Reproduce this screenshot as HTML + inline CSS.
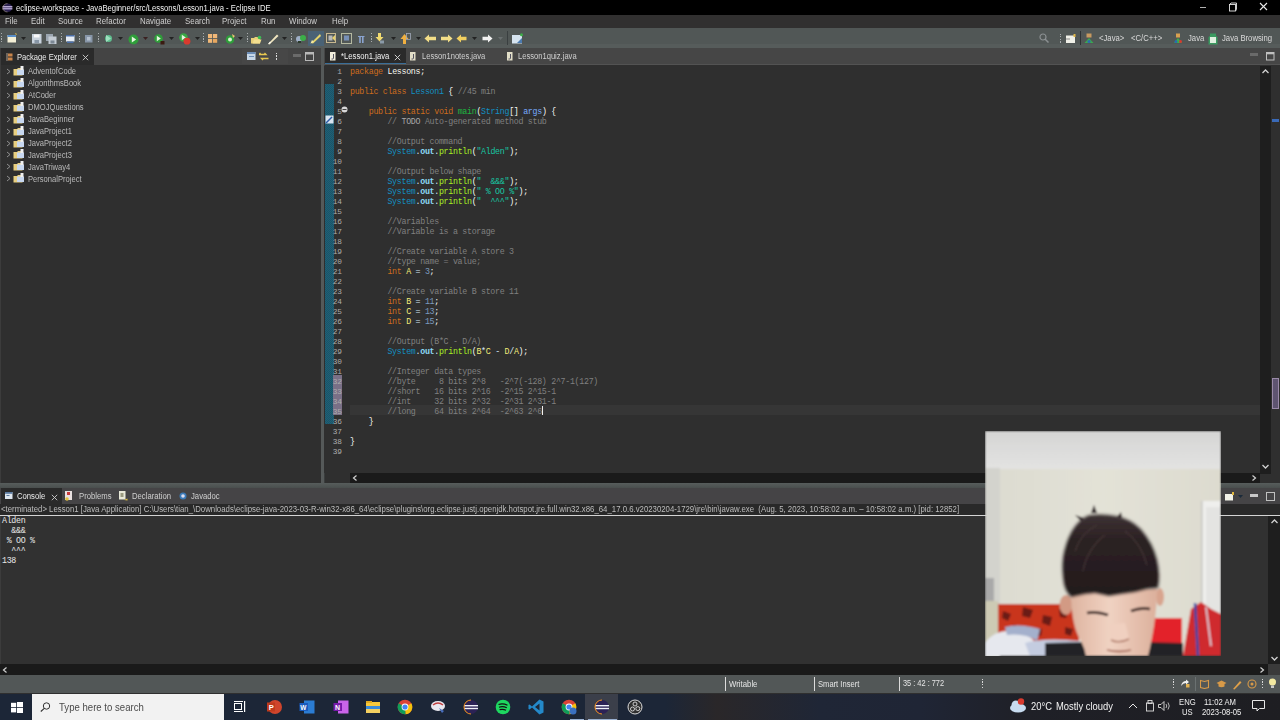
<!DOCTYPE html><html><head><meta charset="utf-8"><style>
html,body{margin:0;padding:0;width:1280px;height:720px;overflow:hidden;background:#2f2f2f;position:relative}
div{box-sizing:border-box}
.code{position:absolute;font-family:'Liberation Mono',monospace;font-size:8.3px;letter-spacing:-0.3px;line-height:10px;white-space:pre;color:#d9e8f7}
.k{color:#cc6c1d}.c{color:#808080}.t{color:#1290c3}.s{color:#17c6a3}.m{color:#1eb540}.p{color:#79abff}.f{color:#8ddaf8;font-weight:bold}.mc{color:#a7ec21}.v{color:#f3ec79}.w{color:#f9faf4}.tg{color:#a8a8a8}.n{color:#7c9cc0}
.ln{position:absolute;font-family:'Liberation Mono',monospace;font-size:7.8px;line-height:10px;white-space:pre;color:#adadad;text-align:right}
</style></head><body>
<div style="position:absolute;left:0px;top:0px;width:1280px;height:15px;background:#000;"></div>
<div style="position:absolute;left:16px;top:4.05px;font:8.47px 'Liberation Sans', sans-serif;color:#f4f4f4;white-space:pre;line-height:1;transform:scaleX(0.9091);transform-origin:0 0;">eclipse-workspace - JavaBeginner/src/Lessons/Lesson1.java - Eclipse IDE</div>
<svg style="position:absolute;left:2px;top:2px;" width="11" height="11" viewBox="0 0 11 11"><ellipse cx="5.5" cy="5.8" rx="4.8" ry="4.2" fill="#2a2050"/><rect x="0.6" y="4.2" width="9.8" height="1.2" fill="#d8c8f0"/><rect x="0.6" y="6.2" width="9.8" height="1.2" fill="#c8b8e8"/><path d="M5.5 1.6A4.8 4.2 0 0 0 5.5 10" fill="none" stroke="#a89a8a" stroke-width="0.6"/></svg>
<div style="position:absolute;left:1199.5px;top:6.5px;width:6.5px;height:1px;background:#b0b0b0;"></div>
<svg style="position:absolute;left:1228px;top:2px;" width="11" height="11" viewBox="0 0 11 11"><rect x="1.5" y="2.5" width="6" height="6.5" fill="none" stroke="#e6e6e6" stroke-width="0.9"/><path d="M1.5 2.5L3 1H8.5V7.5L7.5 9" fill="none" stroke="#e6e6e6" stroke-width="0.9"/></svg>
<svg style="position:absolute;left:1259px;top:2px;" width="10" height="10" viewBox="0 0 10 10"><path d="M1 1L8 8M8 1L1 8" stroke="#e8e8e8" stroke-width="1.1"/></svg>
<div style="position:absolute;left:0px;top:15px;width:1280px;height:13px;background:#313030;"></div>
<div style="position:absolute;left:5px;top:16.83px;font:8.69px 'Liberation Sans', sans-serif;color:#cfcfcf;white-space:pre;line-height:1;transform:scaleX(0.9091);transform-origin:0 0;">File</div>
<div style="position:absolute;left:31px;top:16.83px;font:8.69px 'Liberation Sans', sans-serif;color:#cfcfcf;white-space:pre;line-height:1;transform:scaleX(0.9091);transform-origin:0 0;">Edit</div>
<div style="position:absolute;left:58px;top:16.83px;font:8.69px 'Liberation Sans', sans-serif;color:#cfcfcf;white-space:pre;line-height:1;transform:scaleX(0.9091);transform-origin:0 0;">Source</div>
<div style="position:absolute;left:96px;top:16.83px;font:8.69px 'Liberation Sans', sans-serif;color:#cfcfcf;white-space:pre;line-height:1;transform:scaleX(0.9091);transform-origin:0 0;">Refactor</div>
<div style="position:absolute;left:139.5px;top:16.83px;font:8.69px 'Liberation Sans', sans-serif;color:#cfcfcf;white-space:pre;line-height:1;transform:scaleX(0.9091);transform-origin:0 0;">Navigate</div>
<div style="position:absolute;left:185px;top:16.83px;font:8.69px 'Liberation Sans', sans-serif;color:#cfcfcf;white-space:pre;line-height:1;transform:scaleX(0.9091);transform-origin:0 0;">Search</div>
<div style="position:absolute;left:222px;top:16.83px;font:8.69px 'Liberation Sans', sans-serif;color:#cfcfcf;white-space:pre;line-height:1;transform:scaleX(0.9091);transform-origin:0 0;">Project</div>
<div style="position:absolute;left:261px;top:16.83px;font:8.69px 'Liberation Sans', sans-serif;color:#cfcfcf;white-space:pre;line-height:1;transform:scaleX(0.9091);transform-origin:0 0;">Run</div>
<div style="position:absolute;left:289px;top:16.83px;font:8.69px 'Liberation Sans', sans-serif;color:#cfcfcf;white-space:pre;line-height:1;transform:scaleX(0.9091);transform-origin:0 0;">Window</div>
<div style="position:absolute;left:332px;top:16.83px;font:8.69px 'Liberation Sans', sans-serif;color:#cfcfcf;white-space:pre;line-height:1;transform:scaleX(0.9091);transform-origin:0 0;">Help</div>
<div style="position:absolute;left:0px;top:28px;width:1280px;height:19.5px;background:#515756;"></div>
<div style="position:absolute;left:0px;top:44px;width:1280px;height:3.5px;background:#565c5b;"></div>
<div style="position:absolute;left:0.5px;top:33.0px;width:1.4px;height:1.4px;background:#a8acae;"></div>
<div style="position:absolute;left:0.5px;top:35.6px;width:1.4px;height:1.4px;background:#a8acae;"></div>
<div style="position:absolute;left:0.5px;top:38.2px;width:1.4px;height:1.4px;background:#a8acae;"></div>
<div style="position:absolute;left:0.5px;top:40.8px;width:1.4px;height:1.4px;background:#a8acae;"></div>
<svg style="position:absolute;left:7px;top:33px;" width="10" height="10" viewBox="0 0 10 10"><rect x="0.5" y="2" width="8.5" height="7.5" fill="#f3efd6"/><rect x="0.5" y="2" width="8.5" height="2" fill="#5a8fc9"/><path d="M8 0L9 2L10 1Z" fill="#f2c94c"/></svg>
<svg style="position:absolute;left:21.0px;top:37px;" width="5" height="3" viewBox="0 0 5 3"><path d="M0 0H5L2.5 3Z" fill="#222"/></svg>
<svg style="position:absolute;left:32px;top:33.5px;" width="10" height="10" viewBox="0 0 10 10"><rect x="0" y="0" width="9.5" height="9.5" fill="#c9d3dd"/><rect x="2" y="0.5" width="5.5" height="3" fill="#fafafa"/><rect x="2.5" y="6" width="4.5" height="3" fill="#8796a6"/></svg>
<svg style="position:absolute;left:46px;top:33.5px;" width="11" height="10" viewBox="0 0 11 10"><rect x="0" y="0" width="7" height="7" fill="#9aa5b0"/><rect x="2.5" y="2.5" width="8" height="7.5" fill="#c3cbd3"/><rect x="4.5" y="6.5" width="4" height="3" fill="#7b8894"/></svg>
<div style="position:absolute;left:60.5px;top:33.0px;width:1.4px;height:1.4px;background:#a8acae;"></div>
<div style="position:absolute;left:60.5px;top:35.6px;width:1.4px;height:1.4px;background:#a8acae;"></div>
<div style="position:absolute;left:60.5px;top:38.2px;width:1.4px;height:1.4px;background:#a8acae;"></div>
<div style="position:absolute;left:60.5px;top:40.8px;width:1.4px;height:1.4px;background:#a8acae;"></div>
<svg style="position:absolute;left:66px;top:34.5px;" width="9" height="8" viewBox="0 0 9 8"><rect x="0" y="0" width="8.5" height="6.5" fill="#e6edf5"/><rect x="0" y="0" width="8.5" height="1.5" fill="#4a6ea8"/><rect x="1" y="6.5" width="6.5" height="1.5" fill="#4a6ea8"/></svg>
<div style="position:absolute;left:79px;top:33.0px;width:1.4px;height:1.4px;background:#a8acae;"></div>
<div style="position:absolute;left:79px;top:35.6px;width:1.4px;height:1.4px;background:#a8acae;"></div>
<div style="position:absolute;left:79px;top:38.2px;width:1.4px;height:1.4px;background:#a8acae;"></div>
<div style="position:absolute;left:79px;top:40.8px;width:1.4px;height:1.4px;background:#a8acae;"></div>
<svg style="position:absolute;left:85px;top:35px;" width="8" height="8" viewBox="0 0 8 8"><rect x="0" y="0" width="7.5" height="7.5" fill="#8796a8"/><rect x="2" y="2" width="3.5" height="3.5" fill="#b6c2d0"/></svg>
<div style="position:absolute;left:98px;top:33.0px;width:1.4px;height:1.4px;background:#a8acae;"></div>
<div style="position:absolute;left:98px;top:35.6px;width:1.4px;height:1.4px;background:#a8acae;"></div>
<div style="position:absolute;left:98px;top:38.2px;width:1.4px;height:1.4px;background:#a8acae;"></div>
<div style="position:absolute;left:98px;top:40.8px;width:1.4px;height:1.4px;background:#a8acae;"></div>
<svg style="position:absolute;left:104px;top:34px;" width="9" height="9" viewBox="0 0 9 9"><circle cx="4.5" cy="4.5" r="3.5" fill="#5fbf8f"/><path d="M2 1L7 4.5L2 8Z" fill="#9fe0c0"/></svg>
<svg style="position:absolute;left:118.0px;top:37px;" width="5" height="3" viewBox="0 0 5 3"><path d="M0 0H5L2.5 3Z" fill="#222"/></svg>
<svg style="position:absolute;left:128px;top:33.5px;" width="11" height="11" viewBox="0 0 11 11"><circle cx="5.5" cy="5.5" r="5" fill="#2f9e3a"/><path d="M3.8 2.5L8.2 5.5L3.8 8.5Z" fill="#e6f5e0"/></svg>
<svg style="position:absolute;left:143.0px;top:37px;" width="5" height="3" viewBox="0 0 5 3"><path d="M0 0H5L2.5 3Z" fill="#3a2020"/></svg>
<svg style="position:absolute;left:154px;top:33.5px;" width="11" height="11" viewBox="0 0 11 11"><circle cx="4.5" cy="4.5" r="4.3" fill="#2f9e3a"/><path d="M2.8 1.8L6.8 4.5L2.8 7.2Z" fill="#e6f5e0"/><rect x="6.5" y="7" width="4" height="3.5" fill="#3a1a10"/></svg>
<svg style="position:absolute;left:168.5px;top:37px;" width="5" height="3" viewBox="0 0 5 3"><path d="M0 0H5L2.5 3Z" fill="#222"/></svg>
<svg style="position:absolute;left:179px;top:33px;" width="12" height="12" viewBox="0 0 12 12"><circle cx="4.5" cy="4.5" r="4.3" fill="#3aa845"/><path d="M2.8 1.8L6.8 4.5L2.8 7.2Z" fill="#e6f5e0"/><circle cx="8" cy="8.2" r="3.4" fill="#d83a2e"/></svg>
<svg style="position:absolute;left:194.5px;top:37px;" width="5" height="3" viewBox="0 0 5 3"><path d="M0 0H5L2.5 3Z" fill="#222"/></svg>
<div style="position:absolute;left:203px;top:33.0px;width:1.4px;height:1.4px;background:#a8acae;"></div>
<div style="position:absolute;left:203px;top:35.6px;width:1.4px;height:1.4px;background:#a8acae;"></div>
<div style="position:absolute;left:203px;top:38.2px;width:1.4px;height:1.4px;background:#a8acae;"></div>
<div style="position:absolute;left:203px;top:40.8px;width:1.4px;height:1.4px;background:#a8acae;"></div>
<svg style="position:absolute;left:208px;top:34px;" width="10" height="9" viewBox="0 0 10 9"><rect x="0" y="0" width="4.2" height="4" fill="#f0b878"/><rect x="5" y="0" width="4.2" height="4" fill="#f0b878"/><rect x="0" y="4.8" width="4.2" height="4" fill="#f0b878"/><rect x="5" y="4.8" width="4.2" height="4" fill="#e8a860"/></svg>
<svg style="position:absolute;left:225px;top:33.5px;" width="11" height="10" viewBox="0 0 11 10"><circle cx="5" cy="5.5" r="4.3" fill="#2e9e3a"/><circle cx="5" cy="5.5" r="2" fill="#d8f0d0"/><path d="M7 0L10 2L8 4Z" fill="#e6c870"/></svg>
<svg style="position:absolute;left:238.0px;top:37px;" width="5" height="3" viewBox="0 0 5 3"><path d="M0 0H5L2.5 3Z" fill="#222"/></svg>
<div style="position:absolute;left:246.5px;top:33.0px;width:1.4px;height:1.4px;background:#a8acae;"></div>
<div style="position:absolute;left:246.5px;top:35.6px;width:1.4px;height:1.4px;background:#a8acae;"></div>
<div style="position:absolute;left:246.5px;top:38.2px;width:1.4px;height:1.4px;background:#a8acae;"></div>
<div style="position:absolute;left:246.5px;top:40.8px;width:1.4px;height:1.4px;background:#a8acae;"></div>
<svg style="position:absolute;left:251px;top:33.5px;" width="11" height="10" viewBox="0 0 11 10"><path d="M0 4H3L4 3H9V9.5H0Z" fill="#e8cf78"/><path d="M1.5 9.5L3 5.5H10.5L9 9.5Z" fill="#f3df90"/><circle cx="8.5" cy="3.5" r="1.8" fill="#3cba54"/></svg>
<svg style="position:absolute;left:267px;top:33px;" width="12" height="12" viewBox="0 0 12 12"><path d="M1 11L10 1.5L11.5 3L2.5 11.5Z" fill="#f0e6c0"/><path d="M1 11L3 8.5L4 10Z" fill="#ffffff"/></svg>
<svg style="position:absolute;left:282.0px;top:37px;" width="5" height="3" viewBox="0 0 5 3"><path d="M0 0H5L2.5 3Z" fill="#222"/></svg>
<div style="position:absolute;left:290.8px;top:33.0px;width:1.4px;height:1.4px;background:#a8acae;"></div>
<div style="position:absolute;left:290.8px;top:35.6px;width:1.4px;height:1.4px;background:#a8acae;"></div>
<div style="position:absolute;left:290.8px;top:38.2px;width:1.4px;height:1.4px;background:#a8acae;"></div>
<div style="position:absolute;left:290.8px;top:40.8px;width:1.4px;height:1.4px;background:#a8acae;"></div>
<svg style="position:absolute;left:296px;top:34px;" width="10" height="9" viewBox="0 0 10 9"><circle cx="3" cy="5" r="3" fill="#9fb0c8"/><circle cx="7" cy="4" r="3" fill="#3cae48"/><rect x="2" y="7" width="3" height="2" fill="#2a3a2a"/></svg>
<div style="position:absolute;left:308px;top:30.5px;width:15.5px;height:15px;background:#4a6275;"></div>
<svg style="position:absolute;left:310px;top:33px;" width="12" height="11" viewBox="0 0 12 11"><path d="M1 10L10 1L11 3L3 10.5Z" fill="#e6d46a"/><path d="M0.5 10.5L4 9L2 7Z" fill="#f4eaa8"/></svg>
<svg style="position:absolute;left:326px;top:33px;" width="10" height="10" viewBox="0 0 10 10"><rect x="0.5" y="0.5" width="9" height="9" fill="none" stroke="#c8b890"/><rect x="2.5" y="2.5" width="4" height="5" fill="#b8b8b8"/><path d="M6 5L9 2V8Z" fill="#e6d070"/></svg>
<svg style="position:absolute;left:341px;top:33px;" width="11" height="11" viewBox="0 0 11 11"><rect x="0.5" y="0.5" width="10" height="10" fill="none" stroke="#b4b8a0"/><rect x="3" y="2.5" width="5" height="5" fill="#7890b8"/></svg>
<svg style="position:absolute;left:358px;top:34.5px;" width="7" height="8" viewBox="0 0 7 8"><path d="M0 1H6.5V2H0Z" fill="#8aa4d0"/><rect x="1.2" y="2" width="1.6" height="6" fill="#8aa4d0"/><rect x="4" y="2" width="1.6" height="6" fill="#8aa4d0"/></svg>
<div style="position:absolute;left:371px;top:33.0px;width:1.4px;height:1.4px;background:#a8acae;"></div>
<div style="position:absolute;left:371px;top:35.6px;width:1.4px;height:1.4px;background:#a8acae;"></div>
<div style="position:absolute;left:371px;top:38.2px;width:1.4px;height:1.4px;background:#a8acae;"></div>
<div style="position:absolute;left:371px;top:40.8px;width:1.4px;height:1.4px;background:#a8acae;"></div>
<svg style="position:absolute;left:375px;top:33px;" width="10" height="11" viewBox="0 0 10 11"><path d="M3 0H6V4H8.5L4.5 8.5L0.5 4H3Z" fill="#f0da70"/><rect x="5" y="7.5" width="4" height="3" fill="#8a9aa8"/></svg>
<svg style="position:absolute;left:390.5px;top:37px;" width="5" height="3" viewBox="0 0 5 3"><path d="M0 0H5L2.5 3Z" fill="#222"/></svg>
<svg style="position:absolute;left:400px;top:32.5px;" width="11" height="12" viewBox="0 0 11 12"><path d="M3 11V6H0.5L4.5 1L8.5 6H6V11Z" fill="#f0b040"/><rect x="6.5" y="0.5" width="4" height="6" fill="none" stroke="#a0a8b8" stroke-width="0.8"/></svg>
<svg style="position:absolute;left:416.25px;top:37px;" width="5" height="3" viewBox="0 0 5 3"><path d="M0 0H5L2.5 3Z" fill="#222"/></svg>
<svg style="position:absolute;left:424px;top:34px;" width="13" height="9" viewBox="0 0 13 9"><path d="M0.5 4.5L5 0.5V2.8H12V6.2H5V8.5Z" fill="#f2de88"/></svg>
<svg style="position:absolute;left:440px;top:34px;" width="13" height="9" viewBox="0 0 13 9"><path d="M12.5 4.5L8 0.5V2.8H1V6.2H8V8.5Z" fill="#f2de88"/></svg>
<svg style="position:absolute;left:456px;top:34px;" width="11" height="9" viewBox="0 0 11 9"><path d="M0.5 4.5L5 0.5V2.8H10.5V6.2H5V8.5Z" fill="#f2d060"/></svg>
<svg style="position:absolute;left:472.25px;top:37px;" width="5" height="3" viewBox="0 0 5 3"><path d="M0 0H5L2.5 3Z" fill="#222"/></svg>
<svg style="position:absolute;left:482px;top:34px;" width="11" height="9" viewBox="0 0 11 9"><path d="M10.5 4.5L6 0.5V2.8H0.5V6.2H6V8.5Z" fill="#f2f2f2"/></svg>
<svg style="position:absolute;left:497.5px;top:37px;" width="5" height="3" viewBox="0 0 5 3"><path d="M0 0H5L2.5 3Z" fill="#6a6f70"/></svg>
<div style="position:absolute;left:506.5px;top:31px;width:1px;height:14px;background:#3a3f40;"></div>
<svg style="position:absolute;left:512px;top:33px;" width="11" height="11" viewBox="0 0 11 11"><rect x="0" y="2" width="10" height="8.5" fill="#d6e4f0"/><path d="M5 10L10 5V10Z" fill="#4a7ab0"/><circle cx="9.5" cy="1.8" r="1.5" fill="#3cae48"/></svg>
<svg style="position:absolute;left:1039px;top:33px;" width="10" height="11" viewBox="0 0 10 11"><circle cx="4" cy="4" r="3" fill="none" stroke="#8b9092" stroke-width="1.2"/><path d="M6 6L9.5 9.5" stroke="#8b9092" stroke-width="1.5"/></svg>
<div style="position:absolute;left:1059.5px;top:33.5px;width:1.4px;height:1.4px;background:#a8acae;"></div>
<div style="position:absolute;left:1059.5px;top:36.1px;width:1.4px;height:1.4px;background:#a8acae;"></div>
<div style="position:absolute;left:1059.5px;top:38.7px;width:1.4px;height:1.4px;background:#a8acae;"></div>
<div style="position:absolute;left:1059.5px;top:41.3px;width:1.4px;height:1.4px;background:#a8acae;"></div>
<svg style="position:absolute;left:1066px;top:34px;" width="10" height="9" viewBox="0 0 10 9"><rect x="0" y="1.5" width="9" height="7.5" fill="#f0f0e8"/><rect x="0" y="4.5" width="4" height="1" fill="#888"/><path d="M7.5 0H9.5V3H7.5Z" fill="#e2b848"/></svg>
<div style="position:absolute;left:1080px;top:31px;width:1px;height:14px;background:#2e3234;"></div>
<svg style="position:absolute;left:1084px;top:33px;" width="11" height="11" viewBox="0 0 11 11"><rect x="2.5" y="0.5" width="5" height="4" fill="#c89a60"/><path d="M0.5 10L5 5L9.5 10Z" fill="#3ca850"/><circle cx="5" cy="8.5" r="1.6" fill="#2a6ab0"/></svg>
<div style="position:absolute;left:1099px;top:34.35px;font:8.47px 'Liberation Sans', sans-serif;color:#dadada;white-space:pre;line-height:1;transform:scaleX(0.9091);transform-origin:0 0;">&lt;Java&gt;</div>
<div style="position:absolute;left:1131px;top:34.35px;font:8.47px 'Liberation Sans', sans-serif;color:#dadada;white-space:pre;line-height:1;transform:scaleX(0.9091);transform-origin:0 0;">&lt;C/C++&gt;</div>
<svg style="position:absolute;left:1173px;top:33px;" width="11" height="11" viewBox="0 0 11 11"><rect x="3" y="0.5" width="4" height="4" fill="#d8a050"/><path d="M1 10L5 5L9 10Z" fill="#3cae48"/><circle cx="3" cy="8.5" r="1.5" fill="#2a6ab0"/><circle cx="7.5" cy="8.5" r="1.5" fill="#d83a2e"/></svg>
<div style="position:absolute;left:1188px;top:34.35px;font:8.47px 'Liberation Sans', sans-serif;color:#dadada;white-space:pre;line-height:1;transform:scaleX(0.9091);transform-origin:0 0;">Java</div>
<svg style="position:absolute;left:1208px;top:32.5px;" width="10" height="12" viewBox="0 0 10 12"><path d="M2 0.5H8V3L9.5 4V11.5H0.5V4L2 3Z" fill="#3a9a60"/><rect x="2" y="4" width="6" height="6" fill="#e0f0e0"/></svg>
<div style="position:absolute;left:1222px;top:34.35px;font:8.47px 'Liberation Sans', sans-serif;color:#dadada;white-space:pre;line-height:1;transform:scaleX(0.9091);transform-origin:0 0;">Java Browsing</div>
<div style="position:absolute;left:0px;top:47.5px;width:321px;height:436px;background:#2f2f2f;"></div>
<div style="position:absolute;left:0px;top:47.5px;width:321px;height:17px;background:#444444;"></div>
<div style="position:absolute;left:0px;top:47.5px;width:1px;height:436px;background:#3c3c3c;"></div>
<div style="position:absolute;left:1px;top:48px;width:93px;height:16.5px;background:#2a2a2a;"></div>
<svg style="position:absolute;left:6px;top:52.5px;" width="7" height="8" viewBox="0 0 7 8"><rect x="0.5" y="0" width="1" height="8" fill="#b0a090"/><rect x="2" y="0.5" width="4.5" height="3" fill="#c8844a"/><rect x="2" y="4.5" width="4.5" height="3" fill="#c8844a"/></svg>
<div style="position:absolute;left:16.8px;top:52.56px;font:8.36px 'Liberation Sans', sans-serif;color:#ececec;white-space:pre;line-height:1;transform:scaleX(0.9091);transform-origin:0 0;">Package Explorer</div>
<svg style="position:absolute;left:82px;top:53.5px;" width="7" height="7" viewBox="0 0 7 7"><path d="M0.8 0.8L6.2 6.2M6.2 0.8L0.8 6.2" stroke="#cfcfcf" stroke-width="0.9"/></svg>
<div style="position:absolute;left:242px;top:48.5px;width:46px;height:15px;background:#474747;"></div>
<svg style="position:absolute;left:246.5px;top:52px;" width="9" height="9" viewBox="0 0 9 9"><rect x="0" y="0" width="8.5" height="8" fill="#c8d8e8"/><rect x="0" y="0" width="8.5" height="2" fill="#6e8fb8"/><rect x="2" y="4" width="5" height="1" fill="#6e8fb8"/></svg>
<svg style="position:absolute;left:258.5px;top:52px;" width="10" height="9" viewBox="0 0 10 9"><path d="M0 2.5H7L5.5 1M0 2.5L1.5 1" fill="none" stroke="#e8c850" stroke-width="1.3"/><path d="M9.5 6.5H2.5L4 8" fill="none" stroke="#e8c850" stroke-width="1.3"/></svg>
<div style="position:absolute;left:275.5px;top:52.5px;width:1.6px;height:1.6px;background:#dcdcdc;"></div>
<div style="position:absolute;left:275.5px;top:55.3px;width:1.6px;height:1.6px;background:#dcdcdc;"></div>
<div style="position:absolute;left:275.5px;top:58.1px;width:1.6px;height:1.6px;background:#dcdcdc;"></div>
<div style="position:absolute;left:293px;top:54px;width:8px;height:3px;background:#6a6a6a;"></div>
<svg style="position:absolute;left:305px;top:52px;" width="9" height="9" viewBox="0 0 9 9"><rect x="0.5" y="0.5" width="8" height="8" fill="none" stroke="#b8b8b8"/><rect x="0.5" y="0.5" width="8" height="2" fill="#b8b8b8"/></svg>
<svg style="position:absolute;left:6px;top:67.8px;" width="5" height="7" viewBox="0 0 5 7"><path d="M1 1L4 3.5L1 6" fill="none" stroke="#9a9a9a" stroke-width="0.9"/></svg>
<svg style="position:absolute;left:13px;top:64.8px;" width="12" height="11" viewBox="0 0 12 11"><path d="M0.5 4H4L5 3H9.5V10.5H0.5Z" fill="#e8cf80"/><rect x="4" y="4.5" width="7" height="5.5" fill="#c8d8f0"/><rect x="7.5" y="1" width="3" height="4" fill="#f0f0f0"/></svg>
<div style="position:absolute;left:27.8px;top:67.06px;font:8.36px 'Liberation Sans', sans-serif;color:#bababa;white-space:pre;line-height:1;transform:scaleX(0.9091);transform-origin:0 0;">AdventofCode</div>
<svg style="position:absolute;left:6px;top:79.75px;" width="5" height="7" viewBox="0 0 5 7"><path d="M1 1L4 3.5L1 6" fill="none" stroke="#9a9a9a" stroke-width="0.9"/></svg>
<svg style="position:absolute;left:13px;top:76.75px;" width="12" height="11" viewBox="0 0 12 11"><path d="M0.5 4H4L5 3H9.5V10.5H0.5Z" fill="#e8cf80"/><rect x="4" y="4.5" width="7" height="5.5" fill="#c8d8f0"/><rect x="7.5" y="1" width="3" height="4" fill="#f0f0f0"/></svg>
<div style="position:absolute;left:27.8px;top:79.01px;font:8.36px 'Liberation Sans', sans-serif;color:#bababa;white-space:pre;line-height:1;transform:scaleX(0.9091);transform-origin:0 0;">AlgorithmsBook</div>
<svg style="position:absolute;left:6px;top:91.69999999999999px;" width="5" height="7" viewBox="0 0 5 7"><path d="M1 1L4 3.5L1 6" fill="none" stroke="#9a9a9a" stroke-width="0.9"/></svg>
<svg style="position:absolute;left:13px;top:88.69999999999999px;" width="12" height="11" viewBox="0 0 12 11"><path d="M0.5 4H4L5 3H9.5V10.5H0.5Z" fill="#e8cf80"/><rect x="4" y="4.5" width="7" height="5.5" fill="#c8d8f0"/><rect x="7.5" y="1" width="3" height="4" fill="#f0f0f0"/></svg>
<div style="position:absolute;left:27.8px;top:90.96px;font:8.36px 'Liberation Sans', sans-serif;color:#bababa;white-space:pre;line-height:1;transform:scaleX(0.9091);transform-origin:0 0;">AtCoder</div>
<svg style="position:absolute;left:6px;top:103.64999999999999px;" width="5" height="7" viewBox="0 0 5 7"><path d="M1 1L4 3.5L1 6" fill="none" stroke="#9a9a9a" stroke-width="0.9"/></svg>
<svg style="position:absolute;left:13px;top:100.64999999999999px;" width="12" height="11" viewBox="0 0 12 11"><path d="M0.5 4H4L5 3H9.5V10.5H0.5Z" fill="#e8cf80"/><rect x="4" y="4.5" width="7" height="5.5" fill="#c8d8f0"/><rect x="7.5" y="1" width="3" height="4" fill="#f0f0f0"/></svg>
<div style="position:absolute;left:27.8px;top:102.91px;font:8.36px 'Liberation Sans', sans-serif;color:#bababa;white-space:pre;line-height:1;transform:scaleX(0.9091);transform-origin:0 0;">DMOJQuestions</div>
<svg style="position:absolute;left:6px;top:115.6px;" width="5" height="7" viewBox="0 0 5 7"><path d="M1 1L4 3.5L1 6" fill="none" stroke="#9a9a9a" stroke-width="0.9"/></svg>
<svg style="position:absolute;left:13px;top:112.6px;" width="12" height="11" viewBox="0 0 12 11"><path d="M0.5 4H4L5 3H9.5V10.5H0.5Z" fill="#e8cf80"/><rect x="4" y="4.5" width="7" height="5.5" fill="#c8d8f0"/><rect x="7.5" y="1" width="3" height="4" fill="#f0f0f0"/></svg>
<div style="position:absolute;left:27.8px;top:114.86px;font:8.36px 'Liberation Sans', sans-serif;color:#bababa;white-space:pre;line-height:1;transform:scaleX(0.9091);transform-origin:0 0;">JavaBeginner</div>
<svg style="position:absolute;left:6px;top:127.55000000000001px;" width="5" height="7" viewBox="0 0 5 7"><path d="M1 1L4 3.5L1 6" fill="none" stroke="#9a9a9a" stroke-width="0.9"/></svg>
<svg style="position:absolute;left:13px;top:124.55000000000001px;" width="12" height="11" viewBox="0 0 12 11"><path d="M0.5 4H4L5 3H9.5V10.5H0.5Z" fill="#e8cf80"/><rect x="4" y="4.5" width="7" height="5.5" fill="#c8d8f0"/><rect x="7.5" y="1" width="3" height="4" fill="#f0f0f0"/></svg>
<div style="position:absolute;left:27.8px;top:126.81px;font:8.36px 'Liberation Sans', sans-serif;color:#bababa;white-space:pre;line-height:1;transform:scaleX(0.9091);transform-origin:0 0;">JavaProject1</div>
<svg style="position:absolute;left:6px;top:139.5px;" width="5" height="7" viewBox="0 0 5 7"><path d="M1 1L4 3.5L1 6" fill="none" stroke="#9a9a9a" stroke-width="0.9"/></svg>
<svg style="position:absolute;left:13px;top:136.5px;" width="12" height="11" viewBox="0 0 12 11"><path d="M0.5 4H4L5 3H9.5V10.5H0.5Z" fill="#e8cf80"/><rect x="4" y="4.5" width="7" height="5.5" fill="#c8d8f0"/><rect x="7.5" y="1" width="3" height="4" fill="#f0f0f0"/></svg>
<div style="position:absolute;left:27.8px;top:138.76px;font:8.36px 'Liberation Sans', sans-serif;color:#bababa;white-space:pre;line-height:1;transform:scaleX(0.9091);transform-origin:0 0;">JavaProject2</div>
<svg style="position:absolute;left:6px;top:151.45px;" width="5" height="7" viewBox="0 0 5 7"><path d="M1 1L4 3.5L1 6" fill="none" stroke="#9a9a9a" stroke-width="0.9"/></svg>
<svg style="position:absolute;left:13px;top:148.45px;" width="12" height="11" viewBox="0 0 12 11"><path d="M0.5 4H4L5 3H9.5V10.5H0.5Z" fill="#e8cf80"/><rect x="4" y="4.5" width="7" height="5.5" fill="#c8d8f0"/><rect x="7.5" y="1" width="3" height="4" fill="#f0f0f0"/></svg>
<div style="position:absolute;left:27.8px;top:150.71px;font:8.36px 'Liberation Sans', sans-serif;color:#bababa;white-space:pre;line-height:1;transform:scaleX(0.9091);transform-origin:0 0;">JavaProject3</div>
<svg style="position:absolute;left:6px;top:163.39999999999998px;" width="5" height="7" viewBox="0 0 5 7"><path d="M1 1L4 3.5L1 6" fill="none" stroke="#9a9a9a" stroke-width="0.9"/></svg>
<svg style="position:absolute;left:13px;top:160.39999999999998px;" width="12" height="11" viewBox="0 0 12 11"><path d="M0.5 4H4L5 3H9.5V10.5H0.5Z" fill="#e8cf80"/><rect x="4" y="4.5" width="7" height="5.5" fill="#c8d8f0"/><rect x="7.5" y="1" width="3" height="4" fill="#f0f0f0"/></svg>
<div style="position:absolute;left:27.8px;top:162.66px;font:8.36px 'Liberation Sans', sans-serif;color:#bababa;white-space:pre;line-height:1;transform:scaleX(0.9091);transform-origin:0 0;">JavaTriway4</div>
<svg style="position:absolute;left:6px;top:175.35px;" width="5" height="7" viewBox="0 0 5 7"><path d="M1 1L4 3.5L1 6" fill="none" stroke="#9a9a9a" stroke-width="0.9"/></svg>
<svg style="position:absolute;left:13px;top:172.35px;" width="12" height="11" viewBox="0 0 12 11"><path d="M0.5 4H4L5 3H9.5V10.5H0.5Z" fill="#e8cf80"/><rect x="4" y="4.5" width="7" height="5.5" fill="#c8d8f0"/><rect x="7.5" y="1" width="3" height="4" fill="#f0f0f0"/></svg>
<div style="position:absolute;left:27.8px;top:174.61px;font:8.36px 'Liberation Sans', sans-serif;color:#bababa;white-space:pre;line-height:1;transform:scaleX(0.9091);transform-origin:0 0;">PersonalProject</div>
<div style="position:absolute;left:320.5px;top:47.5px;width:3px;height:436px;background:#555959;"></div>
<div style="position:absolute;left:323.5px;top:47.5px;width:1px;height:436px;background:#3a3d3d;"></div>
<div style="position:absolute;left:324px;top:47.5px;width:956px;height:17px;background:#464646;"></div>
<div style="position:absolute;left:324.5px;top:48px;width:81px;height:15px;background:#2a2a2a;"></div>
<div style="position:absolute;left:324.5px;top:63px;width:81px;height:2.2px;background:#3a6e98;"></div>
<svg style="position:absolute;left:330px;top:51.5px;" width="6" height="9" viewBox="0 0 6 9"><rect x="0" y="0" width="5.5" height="8.5" fill="#f2eedc"/><path d="M3.5 2V6Q3.5 7 2.5 7H1.5" fill="none" stroke="#445" stroke-width="0.9"/></svg>
<div style="position:absolute;left:340.6px;top:52.35px;font:8.47px 'Liberation Sans', sans-serif;color:#f2f2f2;white-space:pre;line-height:1;transform:scaleX(0.9091);transform-origin:0 0;">*Lesson1.java</div>
<svg style="position:absolute;left:393.5px;top:53.5px;" width="7" height="7" viewBox="0 0 7 7"><path d="M0.8 0.8L6.2 6.2M6.2 0.8L0.8 6.2" stroke="#e0e0e0" stroke-width="0.9"/></svg>
<svg style="position:absolute;left:410px;top:51.5px;" width="6" height="9" viewBox="0 0 6 9"><rect x="0" y="0" width="5.5" height="8.5" fill="#e2dec8"/><path d="M3.5 2V6Q3.5 7 2.5 7H1.5" fill="none" stroke="#445" stroke-width="0.9"/></svg>
<div style="position:absolute;left:421.6px;top:52.36px;font:8.36px 'Liberation Sans', sans-serif;color:#cfcfcf;white-space:pre;line-height:1;transform:scaleX(0.9091);transform-origin:0 0;">Lesson1notes.java</div>
<svg style="position:absolute;left:507px;top:51.5px;" width="6" height="9" viewBox="0 0 6 9"><rect x="0" y="0" width="5.5" height="8.5" fill="#e2dec8"/><path d="M3.5 2V6Q3.5 7 2.5 7H1.5" fill="none" stroke="#445" stroke-width="0.9"/></svg>
<div style="position:absolute;left:518px;top:52.36px;font:8.36px 'Liberation Sans', sans-serif;color:#cfcfcf;white-space:pre;line-height:1;transform:scaleX(0.9091);transform-origin:0 0;">Lesson1quiz.java</div>
<div style="position:absolute;left:1250px;top:52.5px;width:8px;height:3px;background:#6a6a6a;"></div>
<svg style="position:absolute;left:1265.5px;top:51.5px;" width="9" height="9" viewBox="0 0 9 9"><rect x="0.5" y="0.5" width="7.5" height="7.5" fill="none" stroke="#c0c0c0"/><rect x="0.5" y="0.5" width="7.5" height="1.8" fill="#c0c0c0"/></svg>
<div style="position:absolute;left:324px;top:64px;width:956px;height:1px;background:#535353;"></div>
<div style="position:absolute;left:324px;top:65.5px;width:936px;height:407.5px;background:#2f2f2f;"></div>
<div style="position:absolute;left:324.5px;top:84px;width:9px;height:340px;background-color:#1f6076;background-image:linear-gradient(45deg,rgba(0,0,0,0.12) 25%,transparent 25%,transparent 75%,rgba(0,0,0,0.12) 75%),linear-gradient(45deg,rgba(0,0,0,0.12) 25%,transparent 25%,transparent 75%,rgba(0,0,0,0.12) 75%);background-size:2px 2px;background-position:0 0,1px 1px"></div>
<div style="position:absolute;left:333px;top:374.5px;width:9px;height:40.5px;background:#7a7087;"></div>
<svg style="position:absolute;left:325px;top:115px;" width="9" height="9" viewBox="0 0 9 9"><rect x="0.5" y="0.5" width="8" height="8" fill="#d8e4f0"/><path d="M1 8L7 2" stroke="#2a5aa8" stroke-width="1.5"/></svg>
<svg style="position:absolute;left:341px;top:106px;" width="7" height="7" viewBox="0 0 7 7"><circle cx="3.5" cy="3.5" r="3" fill="#d8d8d8"/><rect x="1.5" y="3" width="4" height="1" fill="#444"/></svg>
<div style="position:absolute;left:350px;top:404.5px;width:910px;height:10px;background:#363636;"></div>
<div class="code" style="left:350px;top:66.8px"><span class="k">package</span> <span class="w">Lessons;</span>

<span class="k">public</span> <span class="k">class</span> <span class="t">Lesson1</span> <span class="w">{</span> <span class="c">//45 min</span>

    <span class="k">public</span> <span class="k">static</span> <span class="k">void</span> <span class="m">main</span><span class="w">(</span><span class="t">String</span><span class="w">[]</span> <span class="p">args</span><span class="w">) {</span>
        <span class="c">// <span class="tg">TODO</span> Auto-generated method stub</span>

        <span class="c">//Output command</span>
        <span class="t">System</span>.<span class="f">out</span>.<span class="mc">println</span><span class="w">(</span><span class="s">"Alden"</span><span class="w">);</span>

        <span class="c">//Output below shape</span>
        <span class="t">System</span>.<span class="f">out</span>.<span class="mc">println</span><span class="w">(</span><span class="s">"  &amp;&amp;&amp;"</span><span class="w">);</span>
        <span class="t">System</span>.<span class="f">out</span>.<span class="mc">println</span><span class="w">(</span><span class="s">" % OO %"</span><span class="w">);</span>
        <span class="t">System</span>.<span class="f">out</span>.<span class="mc">println</span><span class="w">(</span><span class="s">"  ^^^"</span><span class="w">);</span>

        <span class="c">//Variables</span>
        <span class="c">//Variable is a storage</span>

        <span class="c">//Create variable A store 3</span>
        <span class="c">//type name = value;</span>
        <span class="k">int</span> <span class="v">A</span> = <span class="n">3</span><span class="w">;</span>

        <span class="c">//Create variable B store 11</span>
        <span class="k">int</span> <span class="v">B</span> = <span class="n">11</span><span class="w">;</span>
        <span class="k">int</span> <span class="v">C</span> = <span class="n">13</span><span class="w">;</span>
        <span class="k">int</span> <span class="v">D</span> = <span class="n">15</span><span class="w">;</span>

        <span class="c">//Output (B*C - D/A)</span>
        <span class="t">System</span>.<span class="f">out</span>.<span class="mc">println</span><span class="w">(</span><span class="v">B</span>*<span class="v">C</span> - <span class="v">D</span>/<span class="v">A</span><span class="w">);</span>

        <span class="c">//Integer data types</span>
        <span class="c">//byte     8 bits 2^8   -2^7(-128) 2^7-1(127)</span>
        <span class="c">//short   16 bits 2^16  -2^15 2^15-1</span>
        <span class="c">//int     32 bits 2^32  -2^31 2^31-1</span>
        <span class="c">//long    64 bits 2^64  -2^63 2^6</span>
    <span class="w">}</span>

<span class="w">}</span>
</div>
<div class="ln" style="left:322px;top:66.6px;width:20px">1
2
3
4
5
6
7
8
9
10
11
12
13
14
15
16
17
18
19
20
21
22
23
24
25
26
27
28
29
30
31
32
33
34
35
36
37
38
39</div>
<div style="position:absolute;left:542px;top:405.5px;width:1px;height:9px;background:#f0f0f0;"></div>
<div style="position:absolute;left:1260px;top:65.5px;width:11px;height:408px;background:#1e1e1e;"></div>
<svg style="position:absolute;left:1262px;top:69px;" width="7" height="5" viewBox="0 0 7 5"><path d="M0.5 4L3.5 1L6.5 4" fill="none" stroke="#d0d0d0" stroke-width="1.3"/></svg>
<svg style="position:absolute;left:1262px;top:464px;" width="7" height="5" viewBox="0 0 7 5"><path d="M0.5 1L3.5 4L6.5 1" fill="none" stroke="#d0d0d0" stroke-width="1.3"/></svg>
<div style="position:absolute;left:1272px;top:118.5px;width:7px;height:3px;background:#3a6ab8;"></div>
<div style="position:absolute;left:1272px;top:378px;width:7px;height:31px;background:#5e5470;border:1px solid #9a8aa8"></div>
<div style="position:absolute;left:350px;top:473px;width:910px;height:10px;background:#1a1a1a;"></div>
<svg style="position:absolute;left:352px;top:475px;" width="6" height="6" viewBox="0 0 6 6"><path d="M4.5 0.5L1.5 3L4.5 5.5" fill="none" stroke="#d0d0d0" stroke-width="1.2"/></svg>
<svg style="position:absolute;left:1251px;top:475px;" width="6" height="6" viewBox="0 0 6 6"><path d="M1.5 0.5L4.5 3L1.5 5.5" fill="none" stroke="#d0d0d0" stroke-width="1.2"/></svg>
<div style="position:absolute;left:0;top:483px;width:1280px;height:4.5px;background:linear-gradient(#575d5c,#4a4f4e)"></div>
<div style="position:absolute;left:0px;top:487.5px;width:1280px;height:16.5px;background:#454446;"></div>
<div style="position:absolute;left:1px;top:487.5px;width:61px;height:16.5px;background:#2a2a2a;"></div>
<svg style="position:absolute;left:5px;top:491.5px;" width="8" height="8" viewBox="0 0 8 8"><rect x="0" y="0" width="7.5" height="7" fill="#dde6ee"/><rect x="0" y="0" width="7.5" height="1.8" fill="#5a7aa0"/><rect x="1.5" y="3" width="3" height="1" fill="#5a7aa0"/></svg>
<div style="position:absolute;left:16.5px;top:492.35px;font:8.47px 'Liberation Sans', sans-serif;color:#ececec;white-space:pre;line-height:1;transform:scaleX(0.9091);transform-origin:0 0;">Console</div>
<svg style="position:absolute;left:51px;top:493.5px;" width="7" height="7" viewBox="0 0 7 7"><path d="M0.8 0.8L6.2 6.2M6.2 0.8L0.8 6.2" stroke="#cfcfcf" stroke-width="0.9"/></svg>
<svg style="position:absolute;left:65px;top:491px;" width="9" height="10" viewBox="0 0 9 10"><rect x="0" y="0" width="7" height="9" fill="#e8e0e0"/><rect x="2" y="1" width="3" height="3" fill="#c83a3a"/><circle cx="2" cy="8" r="1.8" fill="#e0c040"/></svg>
<div style="position:absolute;left:79px;top:492.35px;font:8.47px 'Liberation Sans', sans-serif;color:#cfcfcf;white-space:pre;line-height:1;transform:scaleX(0.9091);transform-origin:0 0;">Problems</div>
<svg style="position:absolute;left:119px;top:491px;" width="9" height="10" viewBox="0 0 9 10"><rect x="0" y="0" width="6.5" height="8.5" fill="#e8e8d8"/><rect x="1.5" y="2" width="3" height="4" fill="#9a9a80"/><path d="M5 9L8.5 7.5L8.5 9.5Z" fill="#e0c040"/></svg>
<div style="position:absolute;left:131.5px;top:492.35px;font:8.47px 'Liberation Sans', sans-serif;color:#cfcfcf;white-space:pre;line-height:1;transform:scaleX(0.9091);transform-origin:0 0;">Declaration</div>
<svg style="position:absolute;left:179px;top:492px;" width="8" height="8" viewBox="0 0 8 8"><circle cx="4" cy="4" r="3.5" fill="#3a7ab8"/><circle cx="4" cy="4" r="1.8" fill="#dde"/></svg>
<div style="position:absolute;left:191px;top:492.35px;font:8.47px 'Liberation Sans', sans-serif;color:#cfcfcf;white-space:pre;line-height:1;transform:scaleX(0.9091);transform-origin:0 0;">Javadoc</div>
<svg style="position:absolute;left:1225px;top:491.5px;" width="10" height="9" viewBox="0 0 10 9"><rect x="0" y="2" width="8" height="6.5" fill="#f2f2e8"/><rect x="7" y="0" width="2" height="3" fill="#e0b840"/></svg>
<svg style="position:absolute;left:1238px;top:495px;" width="5" height="3" viewBox="0 0 5 3"><path d="M0 0H5L2.5 3Z" fill="#1a2a3a"/></svg>
<div style="position:absolute;left:1250px;top:494px;width:8px;height:3px;background:#c8c8c8;"></div>
<svg style="position:absolute;left:1266px;top:492px;" width="9" height="9" viewBox="0 0 9 9"><rect x="0.5" y="0.5" width="8" height="8" fill="none" stroke="#c0c0c0"/></svg>
<div style="position:absolute;left:0px;top:504px;width:1280px;height:10.5px;background:#292929;"></div>
<div style="position:absolute;left:1px;top:505.14px;font:8.58px 'Liberation Sans', sans-serif;color:#bdbdbd;white-space:pre;line-height:1;transform:scaleX(0.9091);transform-origin:0 0;">&lt;terminated&gt; Lesson1 [Java Application] C:\Users\tian_\Downloads\eclipse-java-2023-03-R-win32-x86_64\eclipse\plugins\org.eclipse.justj.openjdk.hotspot.jre.full.win32.x86_64_17.0.6.v20230204-1729\jre\bin\javaw.exe  (Aug. 5, 2023, 10:58:02 a.m. – 10:58:02 a.m.) [pid: 12852]</div>
<div style="position:absolute;left:0px;top:514.5px;width:1280px;height:1.5px;background:#d4d4d4;"></div>
<div style="position:absolute;left:0px;top:516px;width:1268px;height:148px;background:#313131;"></div>
<div class="code" style="left:2px;top:515.5px;color:#e8e8e8">Alden
  &amp;&amp;&amp;
 % OO %
  ^^^
138</div>
<div style="position:absolute;left:1268px;top:516px;width:12px;height:148px;background:#1e1e1e;"></div>
<svg style="position:absolute;left:1271px;top:519px;" width="7" height="5" viewBox="0 0 7 5"><path d="M0.5 4L3.5 1L6.5 4" fill="none" stroke="#d0d0d0" stroke-width="1.3"/></svg>
<svg style="position:absolute;left:1271px;top:656px;" width="7" height="5" viewBox="0 0 7 5"><path d="M0.5 1L3.5 4L6.5 1" fill="none" stroke="#d0d0d0" stroke-width="1.3"/></svg>
<div style="position:absolute;left:0px;top:516px;width:1px;height:148px;background:#3c3c3c;"></div>
<div style="position:absolute;left:0px;top:664px;width:1268px;height:11px;background:#1a1a1a;"></div>
<svg style="position:absolute;left:2px;top:666.5px;" width="6" height="6" viewBox="0 0 6 6"><path d="M4.5 0.5L1.5 3L4.5 5.5" fill="none" stroke="#d0d0d0" stroke-width="1.2"/></svg>
<svg style="position:absolute;left:1259px;top:666.5px;" width="6" height="6" viewBox="0 0 6 6"><path d="M1.5 0.5L4.5 3L1.5 5.5" fill="none" stroke="#d0d0d0" stroke-width="1.2"/></svg>
<div style="position:absolute;left:1268px;top:664px;width:12px;height:11px;background:#3a3a3a;"></div>
<div style="position:absolute;left:0px;top:675px;width:1280px;height:18px;background:#525757;"></div>
<div style="position:absolute;left:724.5px;top:677px;width:1.2px;height:14px;background:#dcdcdc;"></div>
<div style="position:absolute;left:813.5px;top:677px;width:1.2px;height:14px;background:#dcdcdc;"></div>
<div style="position:absolute;left:898.5px;top:677px;width:1.2px;height:14px;background:#dcdcdc;"></div>
<div style="position:absolute;left:729px;top:679.84px;font:8.58px 'Liberation Sans', sans-serif;color:#e6e6e6;white-space:pre;line-height:1;transform:scaleX(0.9091);transform-origin:0 0;">Writable</div>
<div style="position:absolute;left:818px;top:679.86px;font:8.36px 'Liberation Sans', sans-serif;color:#e6e6e6;white-space:pre;line-height:1;transform:scaleX(0.9091);transform-origin:0 0;">Smart Insert</div>
<div style="position:absolute;left:903px;top:679.87px;font:8.14px 'Liberation Sans', sans-serif;color:#e6e6e6;white-space:pre;line-height:1;transform:scaleX(0.9091);transform-origin:0 0;">35 : 42 : 772</div>
<div style="position:absolute;left:982px;top:678.5px;width:1.3px;height:1.3px;background:#d8d8d8;"></div>
<div style="position:absolute;left:982px;top:681.3px;width:1.3px;height:1.3px;background:#d8d8d8;"></div>
<div style="position:absolute;left:982px;top:684.1px;width:1.3px;height:1.3px;background:#d8d8d8;"></div>
<div style="position:absolute;left:982px;top:686.9px;width:1.3px;height:1.3px;background:#d8d8d8;"></div>
<div style="position:absolute;left:1172.5px;top:678.5px;width:1.3px;height:1.3px;background:#d8d8d8;"></div>
<div style="position:absolute;left:1172.5px;top:681.3px;width:1.3px;height:1.3px;background:#d8d8d8;"></div>
<div style="position:absolute;left:1172.5px;top:684.1px;width:1.3px;height:1.3px;background:#d8d8d8;"></div>
<div style="position:absolute;left:1172.5px;top:686.9px;width:1.3px;height:1.3px;background:#d8d8d8;"></div>
<svg style="position:absolute;left:1180px;top:679px;" width="10" height="9" viewBox="0 0 10 9"><path d="M1 7Q2 2 6 2L6 0.5L9 3L6 5.5L6 4Q3 4 1 7Z" fill="#f0f0f0"/><rect x="6" y="5" width="3.5" height="3.5" fill="#e0b050"/></svg>
<div style="position:absolute;left:1195px;top:677px;width:1px;height:14px;background:#6b7171;"></div>
<svg style="position:absolute;left:1200px;top:679px;" width="10" height="10" viewBox="0 0 10 10"><path d="M0.5 1.5L4.5 2.5L8.5 1.5V8.5L4.5 9.5L0.5 8.5Z" fill="none" stroke="#d89a48" stroke-width="1.1"/></svg>
<svg style="position:absolute;left:1216px;top:680px;" width="11" height="8" viewBox="0 0 11 8"><path d="M0.5 3L5.5 0.5L10.5 3L5.5 5.5Z" fill="#d89a48"/><path d="M2.5 4V6.5Q5.5 8 8.5 6.5V4" fill="#d89a48"/></svg>
<svg style="position:absolute;left:1232px;top:678.5px;" width="10" height="11" viewBox="0 0 10 11"><path d="M1 10L8 2L9.5 3.5L2.5 10.5Z" fill="#e0a048"/></svg>
<svg style="position:absolute;left:1247px;top:679px;" width="10" height="10" viewBox="0 0 10 10"><circle cx="5" cy="5" r="4" fill="none" stroke="#d89a48" stroke-width="1.1"/><circle cx="5" cy="5" r="1.5" fill="#d89a48"/></svg>
<div style="position:absolute;left:1262px;top:678.5px;width:1.3px;height:1.3px;background:#d8d8d8;"></div>
<div style="position:absolute;left:1262px;top:681.3px;width:1.3px;height:1.3px;background:#d8d8d8;"></div>
<div style="position:absolute;left:1262px;top:684.1px;width:1.3px;height:1.3px;background:#d8d8d8;"></div>
<div style="position:absolute;left:1262px;top:686.9px;width:1.3px;height:1.3px;background:#d8d8d8;"></div>
<svg style="position:absolute;left:1268px;top:678px;" width="9" height="11" viewBox="0 0 9 11"><circle cx="4.5" cy="4" r="3.5" fill="#f2e8a0"/><rect x="3" y="7.5" width="3" height="2.5" fill="#c8c8c8"/></svg>
<div style="position:absolute;left:0;top:693.5px;width:1280px;height:26.5px;background:linear-gradient(90deg,#1c2637 0%,#1c2637 52%,#2a2729 56%,#1f2636 64%,#1f2535 72%,#1f2027 80%,#1e1e22 100%)"></div>
<div style="position:absolute;left:32px;top:693.5px;width:192px;height:26.5px;background:#f2f2f2;"></div>
<svg style="position:absolute;left:10.5px;top:701.5px;" width="12" height="11" viewBox="0 0 12 11"><rect x="0" y="0.8" width="5.2" height="4.4" fill="#fff"/><rect x="6" y="0" width="6" height="5.2" fill="#fff"/><rect x="0" y="6" width="5.2" height="4.4" fill="#fff"/><rect x="6" y="6" width="6" height="5" fill="#fff"/></svg>
<svg style="position:absolute;left:40px;top:702px;" width="11" height="10" viewBox="0 0 11 10"><circle cx="6.5" cy="4" r="3.2" fill="none" stroke="#333" stroke-width="1"/><path d="M4.3 6.3L0.8 9.5" stroke="#333" stroke-width="1.1"/></svg>
<div style="position:absolute;left:59px;top:701.86px;font:10.94px 'Liberation Sans', sans-serif;color:#4a4a4a;white-space:pre;line-height:1;transform:scaleX(0.8772);transform-origin:0 0;">Type here to search</div>
<svg style="position:absolute;left:234px;top:701px;" width="13" height="11" viewBox="0 0 13 11"><rect x="0.5" y="2.5" width="7" height="6" fill="none" stroke="#fff" stroke-width="1"/><rect x="0" y="0" width="9" height="1" fill="#fff"/><rect x="0" y="10" width="9" height="1" fill="#fff"/><rect x="10" y="0" width="1.2" height="11" fill="#fff"/></svg>
<svg style="position:absolute;left:266.0px;top:698.5px;" width="16" height="16" viewBox="0 0 16 16"><circle cx="9" cy="8" r="7" fill="#d0452c"/><rect x="1" y="3.5" width="8" height="9" fill="#c03a1c"/><text x="2.8" y="11" font-family="Liberation Sans" font-size="7.5" font-weight="bold" fill="#fff">P</text></svg>
<svg style="position:absolute;left:299.0px;top:698.5px;" width="16" height="16" viewBox="0 0 16 16"><rect x="5" y="1.5" width="10.5" height="13" fill="#2b7cd3"/><rect x="0.5" y="4" width="8.5" height="8" fill="#185abd"/><text x="1.3" y="10.8" font-family="Liberation Sans" font-size="6.5" font-weight="bold" fill="#fff">W</text></svg>
<svg style="position:absolute;left:332.5px;top:698.5px;" width="16" height="16" viewBox="0 0 16 16"><rect x="5" y="1.5" width="10.5" height="13" fill="#ca64ea"/><rect x="0.5" y="4" width="8.5" height="8" fill="#7719aa"/><text x="2" y="10.8" font-family="Liberation Sans" font-size="7" font-weight="bold" fill="#fff">N</text></svg>
<svg style="position:absolute;left:364.5px;top:698.5px;" width="16" height="16" viewBox="0 0 16 16"><rect x="1" y="3" width="14" height="11" fill="#f8c83a"/><rect x="1" y="2" width="6" height="2" fill="#e0a820"/><rect x="1" y="7" width="14" height="3" fill="#3a8ad8"/><rect x="1" y="10" width="14" height="4" fill="#f4d060"/></svg>
<svg style="position:absolute;left:397.0px;top:698.5px;" width="16" height="16" viewBox="0 0 16 16"><circle cx="8" cy="8" r="7.3" fill="#db4437"/><path d="M8 8L14.3 4.3A7.3 7.3 0 0 1 8.5 15.3Z" fill="#f4c20d"/><path d="M8 8L8.5 15.3A7.3 7.3 0 0 1 1.7 4.3Z" fill="#0f9d58"/><circle cx="8" cy="8" r="3.4" fill="#fff"/><circle cx="8" cy="8" r="2.6" fill="#4285f4"/></svg>
<svg style="position:absolute;left:430.0px;top:698.5px;" width="16" height="16" viewBox="0 0 16 16"><ellipse cx="8" cy="7" rx="7" ry="5" fill="#e8e8f0"/><path d="M3 6Q8 2 13 6" fill="none" stroke="#c04040" stroke-width="1.5"/><path d="M9 9L12 14L14 12Z" fill="#4a70c0"/></svg>
<svg style="position:absolute;left:462.5px;top:698.5px;" width="16" height="16" viewBox="0 0 16 16"><circle cx="8" cy="8" r="7" fill="#2c2255"/><rect x="1" y="6" width="14" height="1.4" fill="#f0f0f8"/><rect x="1" y="8.8" width="14" height="1.4" fill="#f0f0f8"/><path d="M8 1A7 7 0 0 0 8 15" fill="none" stroke="#f7941e" stroke-width="1"/></svg>
<svg style="position:absolute;left:494.5px;top:698.5px;" width="16" height="16" viewBox="0 0 16 16"><circle cx="8" cy="8" r="7.3" fill="#1ed760"/><path d="M3.5 5.5Q8 4 12.5 6.3M4 8.2Q8 7 11.8 8.8M4.6 10.7Q8 9.8 11 11.2" fill="none" stroke="#111" stroke-width="1.2"/></svg>
<svg style="position:absolute;left:528.0px;top:698.5px;" width="16" height="16" viewBox="0 0 16 16"><path d="M11.5 0.5L15.5 2.5V13.5L11.5 15.5L4 8.5L1.5 10.5L0.5 10V6L1.5 5.5L4 7.5ZM11.5 4.5L7 8L11.5 11.5Z" fill="#2489ca"/></svg>
<svg style="position:absolute;left:561.0px;top:698.5px;" width="16" height="16" viewBox="0 0 16 16"><circle cx="8" cy="8" r="7.3" fill="#db4437"/><path d="M8 8L14.3 4.3A7.3 7.3 0 0 1 8.5 15.3Z" fill="#f4c20d"/><path d="M8 8L8.5 15.3A7.3 7.3 0 0 1 1.7 4.3Z" fill="#0f9d58"/><circle cx="8" cy="8" r="3.4" fill="#fff"/><circle cx="8" cy="8" r="2.6" fill="#4285f4"/><circle cx="12" cy="12" r="3.5" fill="#3a70c0"/></svg>
<div style="position:absolute;left:585px;top:693.5px;width:33px;height:26.5px;background:#3b3f4a;"></div>
<svg style="position:absolute;left:594.0px;top:698.5px;" width="16" height="16" viewBox="0 0 16 16"><circle cx="8" cy="8" r="7" fill="#2c2255"/><rect x="1" y="6" width="14" height="1.4" fill="#f0f0f8"/><rect x="1" y="8.8" width="14" height="1.4" fill="#f0f0f8"/><path d="M8 1A7 7 0 0 0 8 15" fill="none" stroke="#f7941e" stroke-width="1"/></svg>
<div style="position:absolute;left:588px;top:718.5px;width:29px;height:1.5px;background:#9ab0d0;"></div>
<svg style="position:absolute;left:626.5px;top:698.5px;" width="16" height="16" viewBox="0 0 16 16"><circle cx="8" cy="8" r="7" fill="#303030" stroke="#dcdcdc" stroke-width="1"/><circle cx="8" cy="5" r="2" fill="none" stroke="#dcdcdc" stroke-width="0.9"/><circle cx="5.5" cy="10" r="2" fill="none" stroke="#dcdcdc" stroke-width="0.9"/><circle cx="10.8" cy="9.6" r="2" fill="none" stroke="#dcdcdc" stroke-width="0.9"/></svg>
<div style="position:absolute;left:570px;top:718.5px;width:14px;height:1.5px;background:#9ab0d0;"></div>
<svg style="position:absolute;left:1009px;top:698px;" width="18" height="15" viewBox="0 0 18 15"><ellipse cx="9" cy="10" rx="8" ry="4.5" fill="#c8dcf0"/><circle cx="7" cy="7" r="4.5" fill="#c8dcf0"/><circle cx="12" cy="3.5" r="3.2" fill="#d83a2e"/></svg>
<div style="position:absolute;left:1031px;top:701.70px;font:10.34px 'Liberation Sans', sans-serif;color:#f4f4f4;white-space:pre;line-height:1;transform:scaleX(0.9091);transform-origin:0 0;">20°C</div>
<div style="position:absolute;left:1056px;top:701.70px;font:10.34px 'Liberation Sans', sans-serif;color:#f4f4f4;white-space:pre;line-height:1;transform:scaleX(0.9091);transform-origin:0 0;">Mostly cloudy</div>
<svg style="position:absolute;left:1128px;top:703px;" width="10" height="6" viewBox="0 0 10 6"><path d="M1 5L5 1L9 5" fill="none" stroke="#e8e8e8" stroke-width="1"/></svg>
<svg style="position:absolute;left:1145px;top:700px;" width="10" height="12" viewBox="0 0 10 12"><rect x="1.5" y="3" width="7" height="8" fill="none" stroke="#ddd" stroke-width="0.9"/><rect x="3" y="0.5" width="4" height="3" fill="none" stroke="#ddd" stroke-width="0.9"/></svg>
<svg style="position:absolute;left:1158px;top:701px;" width="12" height="10" viewBox="0 0 12 10"><path d="M0.5 3.5H3L6 0.5V9.5L3 6.5H0.5Z" fill="none" stroke="#ddd" stroke-width="0.9"/><path d="M8 3Q9.5 5 8 7M10 1.5Q12.5 5 10 8.5" fill="none" stroke="#ddd" stroke-width="0.8"/></svg>
<div style="position:absolute;left:1179px;top:697.85px;font:8.47px 'Liberation Sans', sans-serif;color:#f0f0f0;white-space:pre;line-height:1;transform:scaleX(0.9091);transform-origin:0 0;">ENG</div>
<div style="position:absolute;left:1182px;top:708.35px;font:8.47px 'Liberation Sans', sans-serif;color:#f0f0f0;white-space:pre;line-height:1;transform:scaleX(0.9091);transform-origin:0 0;">US</div>
<div style="position:absolute;left:1204px;top:697.85px;font:8.47px 'Liberation Sans', sans-serif;color:#f0f0f0;white-space:pre;line-height:1;transform:scaleX(0.9091);transform-origin:0 0;">11:02 AM</div>
<div style="position:absolute;left:1201.5px;top:708.35px;font:8.47px 'Liberation Sans', sans-serif;color:#f0f0f0;white-space:pre;line-height:1;transform:scaleX(0.9091);transform-origin:0 0;">2023-08-05</div>
<svg style="position:absolute;left:1252px;top:700px;" width="13" height="12" viewBox="0 0 13 12"><path d="M0.5 0.5H12.5V8.5H7.5L5 11L5 8.5H0.5Z" fill="none" stroke="#e8e8e8" stroke-width="1"/></svg>
<svg style="position:absolute;left:985px;top:431px" width="236" height="225" viewBox="0 0 236 225">
<defs>
<filter id="bl" x="-10%" y="-10%" width="120%" height="120%"><feGaussianBlur stdDeviation="0.9"/></filter>
<linearGradient id="ceil" x1="0" y1="0" x2="0" y2="1"><stop offset="0" stop-color="#d5d5d4"/><stop offset="1" stop-color="#e3e3e2"/></linearGradient>
<linearGradient id="wall" x1="0" y1="0" x2="1" y2="0"><stop offset="0" stop-color="#dcdbd0"/><stop offset="0.5" stop-color="#e3e2d7"/><stop offset="1" stop-color="#dddbcf"/></linearGradient>
<linearGradient id="hair" x1="0" y1="0" x2="0" y2="1"><stop offset="0" stop-color="#3e3234"/><stop offset="0.3" stop-color="#2c2224"/><stop offset="1" stop-color="#231a1c"/></linearGradient><filter id="bl2" x="-10%" y="-10%" width="120%" height="120%"><feGaussianBlur stdDeviation="1.2"/></filter>
<linearGradient id="face" x1="0" y1="0" x2="1" y2="0"><stop offset="0" stop-color="#deb4a0"/><stop offset="0.45" stop-color="#f0d2c2"/><stop offset="1" stop-color="#dcb09c"/></linearGradient>
</defs>
<g filter="url(#bl)">
<rect width="236" height="225" fill="url(#wall)"/>
<rect width="236" height="38" fill="url(#ceil)"/>
<rect x="0" y="37" width="15" height="190" fill="#d3d3cd"/>
<rect x="0" y="147" width="9" height="24" fill="#a9a9a9"/>
<rect x="0" y="170" width="13" height="45" fill="#cdcab4"/>
<rect x="216" y="70" width="20" height="155" fill="#efefed"/>
<rect x="221" y="76" width="15" height="149" fill="#e4e4e2"/>
<rect x="216" y="70" width="1.5" height="155" fill="#c4c4c0"/>
<path d="M13 173H94V210H13Z" fill="#c9351f"/>
<path d="M18 180l8 3l-3 7l-6-3zM38 176l10 3l-3 8l-8-2zM58 184l9 2l-2 9l-8-3zM28 194l8 2l-1 8l-8-2zM74 178l9 2l-2 7l-6-1zM48 197l9 1l-1 7l-8-1zM80 196l8 2l-2 7l-6-2z" fill="#4a1410" opacity="0.75"/>
<path d="M165 187H197V212H165Z" fill="#e3232c"/>
<path d="M0 212Q10 198 30 200Q45 202 50 212L52 225H0Z" fill="#e6e8ee"/>
<path d="M20 196Q35 192 55 198L52 210Q40 202 22 204Z" fill="#a4b0cc"/>
<path d="M40 212Q60 206 95 210L100 225H45Z" fill="#c4cce0"/>
<path d="M198 225L206 178L216 171L226 178L236 183V225Z" fill="#cf2a2e"/>
<path d="M210 172L213 225" stroke="#2a4aa8" stroke-width="2.5"/>
<path d="M221 176L226 215" stroke="#dfe0ea" stroke-width="1.5"/>
<path d="M60 225V212L102 211L110 225ZM150 225L156 211L198 212V225Z" fill="#242427"/>
<ellipse cx="81" cy="174" rx="6.5" ry="10" fill="#d29a84"/>
<ellipse cx="175" cy="166" rx="4" ry="9" fill="#d8a48e"/>
<path d="M86 160Q86 195 96 210Q100 218 101 225H163Q166 214 169 195Q172 175 172 158Z" fill="url(#face)"/>
<path d="M104 84Q118 82 132 85Q146 88 156 98Q168 112 172 128Q176 145 173 157L162 158L150 161L136 163L124 165L110 162L100 163L86 166Q79 160 78 148Q76 132 79 120Q83 104 90 95Q96 87 104 84Z" fill="url(#hair)" filter="url(#bl2)"/>
<path d="M106 82l3-8l3 8zM96 90l-6-6l9 3zM132 86l4-5l1 6z" fill="#2a1e20"/>
<path d="M90 120Q96 102 112 94M98 140Q102 118 120 104M140 100Q156 112 162 134" fill="none" stroke="#4a3c3c" stroke-width="1.2" opacity="0.8"/>
<path d="M102 182Q112 180 123 184" stroke="#3a2624" stroke-width="2.6" fill="none"/>
<path d="M146 180Q156 176 165 178" stroke="#3a2624" stroke-width="2.6" fill="none"/>
<path d="M124 193Q124 204 126 209Q134 212 144 208Q142 198 140 192Z" fill="#f0d0c0"/>
<path d="M126 209Q134 213 144 208" stroke="#b07a68" stroke-width="1.5" fill="none"/>
<path d="M122 219Q134 222 146 219" stroke="#a86a5a" stroke-width="1.8" fill="none"/>
</g>
</svg>
</body></html>
